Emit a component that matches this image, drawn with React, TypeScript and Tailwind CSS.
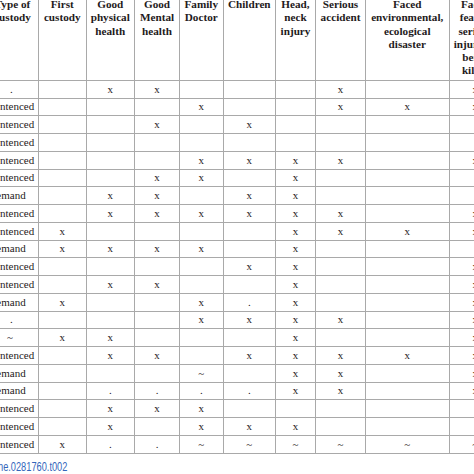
import React from 'react';

const headers: string[][] = [
  ['Type of', 'custody'],
  ['First', 'custody'],
  ['Good', 'physical', 'health'],
  ['Good', 'Mental', 'health'],
  ['Family', 'Doctor'],
  ['Children'],
  ['Head,', 'neck', 'injury'],
  ['Serious', 'accident'],
  ['Faced', 'environmental,', 'ecological', 'disaster'],
  ['Faced', 'fear of', 'serious', 'injury or', 'being', 'killed'],
];

// column widths, first one starts off-screen
const widths = [52, 47.5, 48.5, 45, 43.5, 52.5, 40, 50, 83.5, 52.5];

// label, then one char per column: ' ' empty, 'x', '.', '~'
const rows: [string, string][] = [
  ['.', ' xx   x x'],
  ['Sentenced', '   x  xxx'],
  ['Sentenced', '  x x    '],
  ['Sentenced', '         '],
  ['Sentenced', '   xxxx x'],
  ['Sentenced', '  xx x   '],
  ['Remand', ' xx xx   '],
  ['Sentenced', ' xxxxxx x'],
  ['Sentenced', 'x    xxxx'],
  ['Remand', 'xxxx x   '],
  ['Sentenced', '    xx  x'],
  ['Sentenced', ' xx  x  x'],
  ['Remand', 'x  x.x  x'],
  ['.', '   xxxx x'],
  ['~', 'xx   x  x'],
  ['Sentenced', ' xx xxxxx'],
  ['Remand', '   ~ xx x'],
  ['Remand', ' ....xx x'],
  ['Sentenced', ' xxx     '],
  ['Sentenced', ' x xxx   '],
  ['Sentenced', 'x..~~~~~~'],
];

const labelPad = (label: string) => {
  if (label === '.') return 'pl-[23px]';
  if (label === '~') return 'pl-[20px]';
  return 'pl-[2px]';
};

const App: React.FC = () => {
  return (
    <div className="w-[474px] h-[474px] overflow-hidden bg-white text-[#1f1b1c] font-['Liberation_Serif',serif]">
      <table className="table-fixed border-collapse -ml-[14px] -mt-[2px] w-[515px]">
        <colgroup>
          {widths.map((w, i) => (
            <col key={i} style={{ width: w }} />
          ))}
        </colgroup>
        <thead>
          <tr>
            {headers.map((lines, i) => (
              <th
                key={i}
                className="align-top text-center font-bold text-[11.2px] leading-[13.3px] pt-0 pb-[2px] px-0 whitespace-nowrap border-x border-b border-[#a9a9a9]"
              >
                {lines.map((l, j) => (
                  <div key={j}>{l}</div>
                ))}
              </th>
            ))}
          </tr>
        </thead>
        <tbody>
          {rows.map(([label, marks], r) => (
            <tr key={r} className="h-[17.75px]">
              <td
                className={`text-left text-[11px] leading-none whitespace-nowrap p-0 border border-[#a9a9a9] ${labelPad(label)}`}
              >
                {label}
              </td>
              {marks.split('').map((m, c) => (
                <td
                  key={c}
                  className="text-center text-[11px] leading-none p-0 border border-[#a9a9a9]"
                >
                  {m === ' ' ? '' : m}
                </td>
              ))}
            </tr>
          ))}
        </tbody>
      </table>
      <div className="mt-[7px] -ml-[2px] text-[12px] leading-[13px] text-[#3366bb] font-['Liberation_Sans',sans-serif] whitespace-nowrap origin-left scale-x-[0.77]">
        ne.0281760.t002
      </div>
    </div>
  );
};

export default App;
